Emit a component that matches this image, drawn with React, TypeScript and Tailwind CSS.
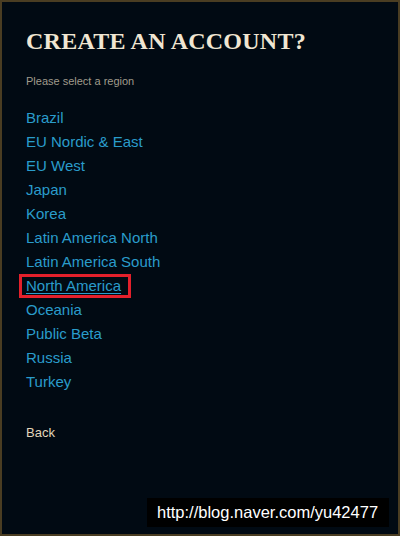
const regions = [
  'Brazil',
  'EU Nordic & East',
  'EU West',
  'Japan',
  'Korea',
  'Latin America North',
  'Latin America South',
  'North America',
  'Oceania',
  'Public Beta',
  'Russia',
  'Turkey',
];

export default function App() {
  return (
    <div className="relative w-[400px] h-[536px] bg-[#010a13] border-2 border-[#4a3d22] overflow-hidden">
      <div className="flex flex-col pl-6 pt-[23px]">
        <h1 className="font-['Liberation_Serif',serif] font-bold text-[24px] leading-[32px] tracking-[0.01em] text-[#f0e6d2]">
          CREATE AN ACCOUNT?
        </h1>
        <p className="mt-[17px] font-['Liberation_Sans',Arial,sans-serif] text-[11px] leading-[14px] text-[#a09b8c]">
          Please select a region
        </p>

        <ul className="mt-[18px] flex flex-col font-['Liberation_Sans',Arial,sans-serif] text-[15px] leading-[24px] text-[#2a9ccb]">
          {regions.map((r) =>
            r === 'North America' ? (
              <li key={r} className="flex">
                <span className="-ml-[7px] pl-[4px] pr-[7px] border-[3px] border-[#e3202b] leading-[18px] underline underline-offset-2">
                  {r}
                </span>
              </li>
            ) : (
              <li key={r}>{r}</li>
            )
          )}
        </ul>

        <a className="mt-[31px] font-['Liberation_Sans',Arial,sans-serif] text-[13px] leading-[16px] text-[#e2d6bb]">
          Back
        </a>
      </div>

      <div className="absolute left-[145px] top-[496px] w-[242px] h-[29px] bg-black flex items-center pl-[10px]">
        <span className="font-['Liberation_Sans',Arial,sans-serif] text-[16.5px] text-white">
          http://blog.naver.com/yu42477
        </span>
      </div>
    </div>
  );
}
